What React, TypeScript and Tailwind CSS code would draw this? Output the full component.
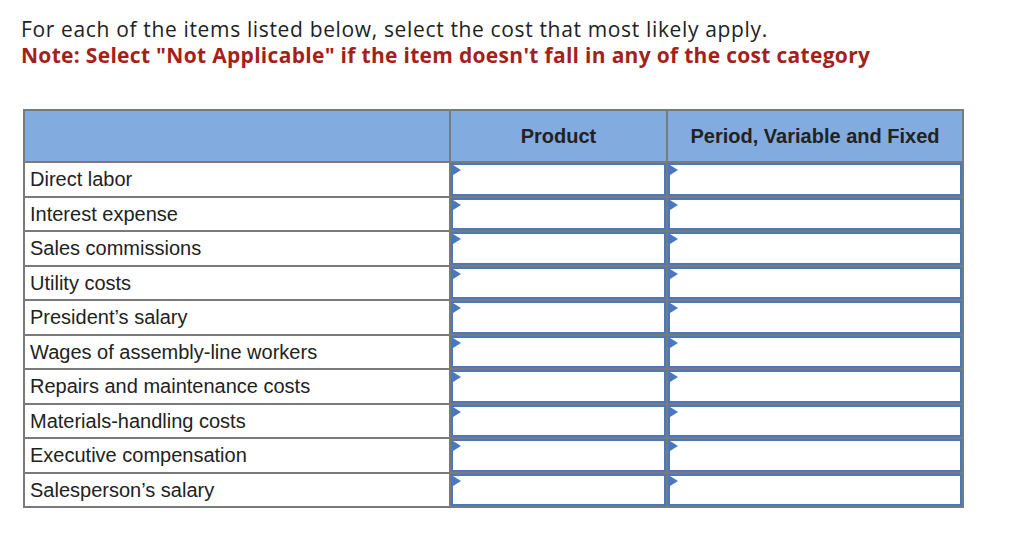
import React from 'react';

const items = [
  'Direct labor',
  'Interest expense',
  'Sales commissions',
  'Utility costs',
  'President\u2019s salary',
  'Wages of assembly-line workers',
  'Repairs and maintenance costs',
  'Materials-handling costs',
  'Executive compensation',
  'Salesperson\u2019s salary',
];

function DropCell() {
  return (
    <div className="relative h-full w-full border-2 border-[#4a78bf] bg-white">
      <svg className="absolute left-0 top-0" width="8" height="10" viewBox="0 0 8 10">
        <polygon points="0,0 8,5 0,10" fill="#4a78bf" />
      </svg>
    </div>
  );
}

export default function App() {
  return (
    <div className="min-h-screen bg-white pl-[21px] pt-[16px] font-['Open_Sans',sans-serif]">
      {/* Instructions */}
      <p className="text-[21px] leading-[26px] tracking-[0.65px] text-[#222]">
        For each of the items listed below, select the cost that most likely apply.
      </p>
      <p className="text-[21px] leading-[26px] tracking-[0.3px] font-bold text-[#a51f1b]">
        Note: Select "Not Applicable" if the item doesn't fall in any of the cost category
      </p>

      {/* Table */}
      <div className="mt-[41px] ml-[2px] w-[941px] bg-[#7a7a7a] p-[2px] font-['Liberation_Sans',Arial,sans-serif] text-[#222]">
        <div className="grid grid-cols-[424px_215px_294px] gap-[2px]">
          <div className="h-[50px] bg-[#82abe0]" />
          <div className="flex h-[50px] items-center justify-center bg-[#82abe0] text-[20px] font-bold">
            Product
          </div>
          <div className="flex h-[50px] items-center justify-center bg-[#82abe0] text-[20px] font-bold">
            Period, Variable and Fixed
          </div>

          {items.map((item) => (
            <React.Fragment key={item}>
              <div className="flex h-[32.5px] items-center bg-white pl-[5px] text-[20px]">{item}</div>
              <div className="h-[32.5px] bg-white">
                <DropCell />
              </div>
              <div className="h-[32.5px] bg-white">
                <DropCell />
              </div>
            </React.Fragment>
          ))}
        </div>
      </div>
    </div>
  );
}
